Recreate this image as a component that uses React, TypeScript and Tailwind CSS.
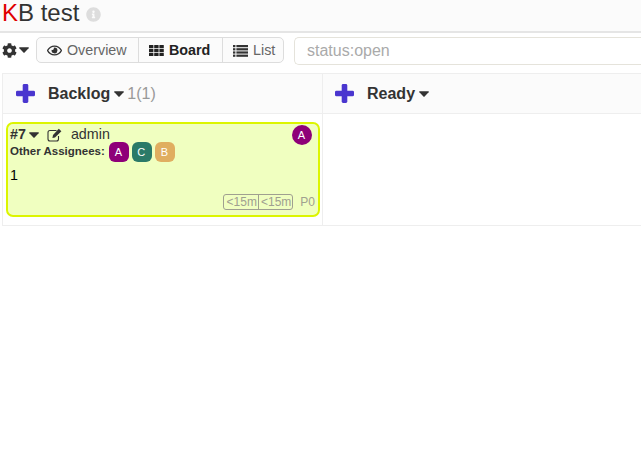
import React from "react";
import { FaCog, FaRegEye, FaInfoCircle } from "react-icons/fa";

function Badge({ c, color, round }: { c: string; color: string; round?: boolean }) {
  return (
    <span className={`flex h-5 w-5 items-center justify-center pr-[1px] text-[11px] text-white ${round ? "rounded-full" : "rounded-[6px]"} ${color}`}>
      {c}
    </span>
  );
}

function Caret({ className }: { className?: string }) {
  return (
    <svg viewBox="0 0 10 6" className={`h-[6px] w-[10px] fill-[#333] ${className ?? ""}`}>
      <path d="M0.4 0.3 H9.6 Q10 0.6 9.6 1.2 L5.6 5.5 Q5 6 4.4 5.5 L0.4 1.2 Q0 0.6 0.4 0.3 Z" />
    </svg>
  );
}

function Plus() {
  return (
    <svg viewBox="0 0 19 19" className="h-[19px] w-[19px] fill-[#4a36cf]">
      <rect x="6.7" y="0" width="5.6" height="19" rx="1.4" />
      <rect x="0" y="6.7" width="19" height="5.6" rx="1.4" />
    </svg>
  );
}

function Grid() {
  const xs = [0, 5.2, 10.4];
  const ys = [0, 4, 8];
  return (
    <svg viewBox="0 0 15 11" className="h-[11px] w-[15px] fill-current">
      {ys.map((y) => xs.map((x) => <rect key={`${x}-${y}`} x={x} y={y} width="4.4" height="3.2" rx="0.3" />))}
    </svg>
  );
}

function ListIcon() {
  const ys = [0, 3.2, 6.4, 9.6];
  return (
    <svg viewBox="0 0 15 12" className="h-[12px] w-[15px] fill-[#333]">
      {ys.map((y) => (
        <g key={y}>
          <rect x="0" y={y} width="2.4" height="2.2" />
          <rect x="3.4" y={y} width="11.6" height="2.2" />
        </g>
      ))}
    </svg>
  );
}

function EditIcon() {
  return (
    <svg viewBox="0 0 15 14" className="h-[14px] w-[15px]">
      <path d="M9.5 2.5 H3 Q1 2.5 1 4.5 V11 Q1 13 3 13 H9.5 Q11.5 13 11.5 11 V8" fill="none" stroke="#333" strokeWidth="1.1" />
      <path d="M11.8 0.8 L14.4 3.2 L8 9.4 L5.4 10 L6 7.1 Z" fill="#333" />
    </svg>
  );
}

export default function App() {
  return (
    <div className="h-[454px] w-[641px] overflow-hidden bg-white font-['Liberation_Sans',sans-serif] text-[#333]">
      <div className="flex h-[33px] items-start border-b-2 border-[#e5e5e5] bg-[#fbfbfb] pl-[2px]">
        <h1 className="text-[24px] leading-[26px] font-normal">
          <span className="text-[#e00000]">K</span>B test
        </h1>
        <FaInfoCircle className="ml-[7px] mt-[7px] text-[15px] text-[#ddd]" />
      </div>
      <div className="flex h-[40px] items-start bg-white pl-[2px] pt-[4px]">
        <div className="flex h-[26px] w-[34px] items-center">
          <FaCog className="text-[15px] text-[#333]" />
          <Caret className="ml-[2px]" />
        </div>
        <div className="flex h-[26px] items-center rounded-[5px] border border-[#ddd] bg-[#fbfbfb] text-[14.3px]">
          <div className="flex h-full w-[102px] items-center gap-[5px] border-r border-[#ddd] pl-[10px] pt-[1px] text-[#666]">
            <FaRegEye className="text-[15px] text-[#333]" />
            Overview
          </div>
          <div className="flex h-full w-[84px] items-center gap-[5px] border-r border-[#ddd] pl-[10px] pt-[1px] font-bold text-[#222]">
            <Grid />
            Board
          </div>
          <div className="flex h-full w-[60px] items-center gap-[5px] pl-[10px] pt-[1px] text-[#666]">
            <ListIcon />
            List
          </div>
        </div>
        <div className="ml-[10px] flex h-[28px] flex-1 items-center rounded-l-[5px] border border-r-0 border-[#e5e3db] pl-[12px] text-[16px] text-[#aaa]">
          status:open
        </div>
      </div>
      <div className="ml-[2px] flex h-[41px] border-y border-[#eee] bg-[#fbfbfb]">
        <div className="flex w-[321px] items-center border-x border-[#eee] pl-[13px]">
          <Plus />
          <span className="ml-[13px] text-[16px] font-bold">Backlog</span>
          <Caret className="ml-[4px]" />
          <span className="ml-[3px] text-[16px] text-[#999]">1(1)</span>
        </div>
        <div className="flex flex-1 items-center pl-[12px]">
          <Plus />
          <span className="ml-[13px] text-[16px] font-bold">Ready</span>
          <Caret className="ml-[4px]" />
        </div>
      </div>
      <div className="ml-[2px] flex h-[112px] border-b border-[#eee]">
        <div className="w-[321px] border-x border-[#eee] px-[3px] pt-[8px]">
          <div className="relative h-[95px] w-[314px] rounded-[7px] border-2 border-[#dcf500] bg-[#f0ffc0] pl-[2px] pr-[3px]">
            <div className="mb-[-4px] flex h-[22px] items-center">
              <span className="text-[14.3px] font-bold">#7</span>
              <Caret className="ml-[3px]" />
              <span className="ml-[8px]"><EditIcon /></span>
              <span className="ml-[9px] text-[14.3px]">admin</span>
            </div>
            <span className="absolute right-[6px] top-[1px]">
              <Badge c="A" color="bg-[#8e0078]" round />
            </span>
            <div className="flex h-[20px] items-center">
              <span className="mr-[4px] text-[11.5px] font-bold">Other Assignees:</span>
              <span className="flex gap-[3px]">
                <Badge c="A" color="bg-[#8e0078]" />
                <Badge c="C" color="bg-[#2b7a68]" />
                <Badge c="B" color="bg-[#e0ae60]" />
              </span>
            </div>
            <div className="mt-[3px] h-[20px] text-[14.3px] leading-[20px] text-black">1</div>
            <div className="mt-[8px] flex items-center justify-end text-[12px] text-[#a0a090]">
              <span className="flex h-[16px] items-center rounded-[3px] border border-[#a0a090] leading-none">
                <span className="border-r border-[#a0a090] pl-[3px] pr-[1.5px] leading-[14px]">&lt;15m</span>
                <span className="pl-[1.5px] pr-[1px] leading-[14px]">&lt;15m</span>
              </span>
              <span className="ml-[7px]">P0</span>
            </div>
          </div>
        </div>
      </div>
    </div>
  );
}
